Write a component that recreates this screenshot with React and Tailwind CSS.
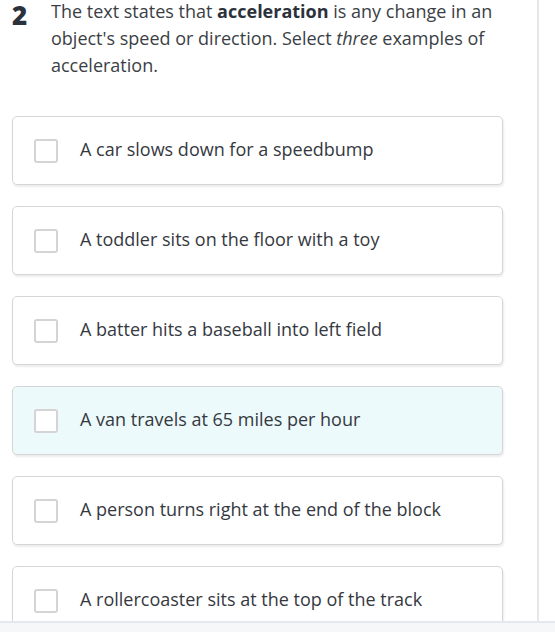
export default function App() {
  const options = [
    "A car slows down for a speedbump",
    "A toddler sits on the floor with a toy",
    "A batter hits a baseball into left field",
    "A van travels at 65 miles per hour",
    "A person turns right at the end of the block",
    "A rollercoaster sits at the top of the track",
  ];

  return (
    <div
      className="h-[632px] w-[555px] overflow-hidden bg-white flex flex-col"
      style={{ fontFamily: '"Open Sans", "Liberation Sans", sans-serif' }}
    >
      <div className="flex flex-1 min-h-0">
        <div className="w-[537px] shrink-0 overflow-hidden">
          {/* QUESTION */}
          <div className="flex pl-3 pt-[2px]">
            <span className="w-[39px] shrink-0 text-[26px] font-extrabold leading-[26px] text-[#2b323c]">
              2
            </span>
            <p className="-mt-[4px] w-[470px] text-[18px] leading-[27px] text-[#3b3f45]">
              The text states that <b className="font-bold text-[#2b323c]">acceleration</b> is any change in an
              object's speed or direction. Select <i>three</i> examples of acceleration.
            </p>
          </div>

          {/* OPTIONS */}
          <div className="mt-[37px] flex flex-col gap-[21px] pl-3">
            {options.map((text, i) => (
              <Option key={i} text={text} active={i === 3} />
            ))}
          </div>
        </div>
        <div className="w-[2px] bg-[#e5e7eb]" />
        <div className="flex-1" />
      </div>
      <div className="h-[11px] shrink-0 border-t-2 border-[#e5e8ee] bg-[#f6f7f9]" />
    </div>
  );
}

function Option({ text, active }) {
  return (
    <div
      className={`flex h-[69px] w-[491px] shrink-0 items-center gap-[22px] rounded-[5px] border border-[#d6d6d6] pl-[21px] shadow-[1px_2px_2px_rgba(0,0,0,0.08)] ${
        active ? "bg-[#ecfafb]" : "bg-white"
      }`}
    >
      <span className="h-[24px] w-[24px] shrink-0 rounded-[3px] border-2 border-[#d4d4d4] bg-white" />
      <span className="pb-[3px] text-[18px] leading-[24px] text-[#35393f]">{text}</span>
    </div>
  );
}
